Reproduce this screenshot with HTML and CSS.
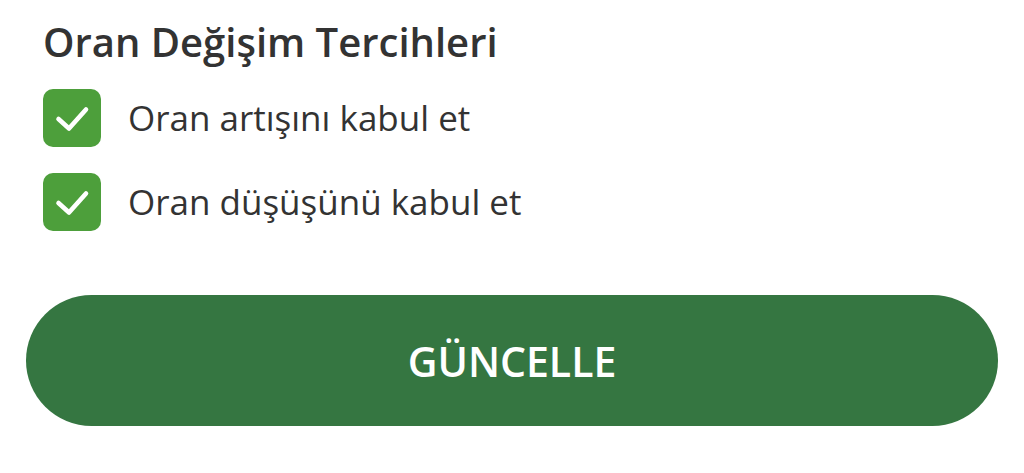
FILE: index.html
```html
<!DOCTYPE html>
<html lang="tr">
<head>
<meta charset="utf-8">
<link rel="stylesheet" href="styles.css">
</head>
<body>
<div class="panel">
  <h1 class="title">Oran Değişim Tercihleri</h1>
  <div class="options">
    <label class="option">
      <span class="box"><svg viewBox="0 0 58 58" width="58" height="58"><path d="M15.5 30L26 39.5L43 20.5" fill="none" stroke="#fff" stroke-width="4.6" stroke-linecap="round" stroke-linejoin="round"/></svg></span>
      <span class="text">Oran artışını kabul et</span>
    </label>
    <label class="option">
      <span class="box"><svg viewBox="0 0 58 58" width="58" height="58"><path d="M15.5 30L26 39.5L43 20.5" fill="none" stroke="#fff" stroke-width="4.6" stroke-linecap="round" stroke-linejoin="round"/></svg></span>
      <span class="text">Oran düşüşünü kabul et</span>
    </label>
  </div>
  <button class="update">GÜNCELLE</button>
</div>
</body>
</html>
```
FILE: styles.css
```css
html, body {
  margin: 0;
  padding: 0;
  background: #ffffff;
}
body {
  font-family: "Open Sans", "Noto Sans", sans-serif;
  color: #333333;
}
.panel {
  display: flex;
  flex-direction: column;
  padding: 15px 26px 0 26px;
}
.title {
  margin: 0 0 0 17px;
  font-size: 40px;
  font-weight: 600;
  line-height: 54px;
  color: #333333;
}
.options {
  display: flex;
  flex-direction: column;
  gap: 26px;
  margin: 20px 0 0 17px;
}
.option {
  display: flex;
  align-items: center;
  gap: 27px;
}
.box {
  width: 58px;
  height: 58px;
  border-radius: 10px;
  background: #4d9f3b;
  display: flex;
  align-items: center;
  justify-content: center;
}
.text {
  font-size: 35px;
  line-height: 58px;
  color: #333333;
}
.update {
  margin-top: 64px;
  height: 131px;
  width: 972px;
  border: none;
  border-radius: 66px;
  background: #357641;
  color: #ffffff;
  font-family: "Open Sans", "Noto Sans", sans-serif;
  font-size: 41px;
  font-weight: 600;
  padding: 0;
}
```
